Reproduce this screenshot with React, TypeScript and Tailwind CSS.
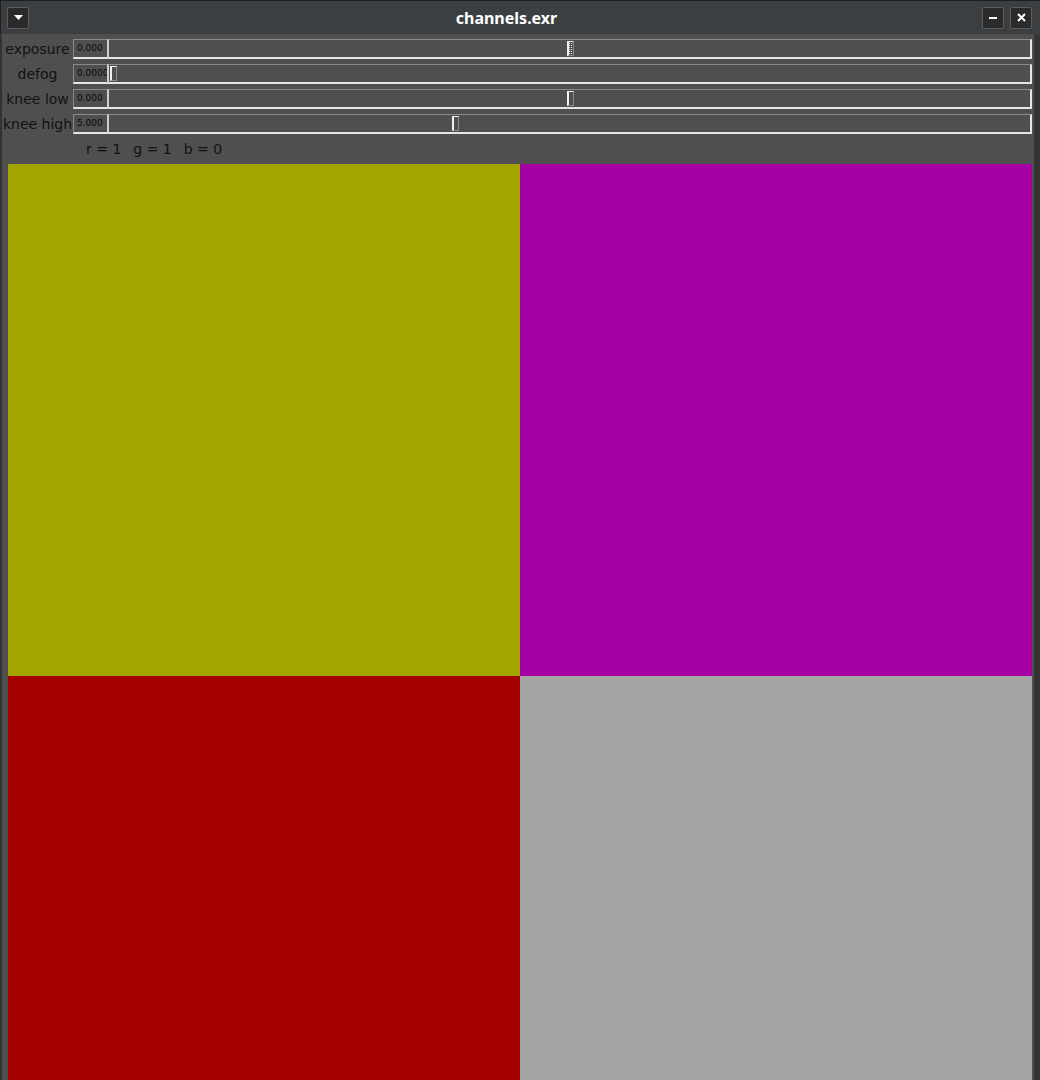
import React from "react";

interface SliderRow {
  label: string;
  value: string;
  frac: number;
  focused?: boolean;
}

const rows: SliderRow[] = [
  { label: "exposure", value: "0.000", frac: 0.498, focused: true },
  { label: "defog", value: "0.0000", frac: 0.002 },
  { label: "knee low", value: "0.000", frac: 0.498 },
  { label: "knee high", value: "5.000", frac: 0.373 },
];

const sans = { fontFamily: '"DejaVu Sans", sans-serif' };

function Slider({ row }: { row: SliderRow }) {
  return (
    <div className="flex h-[20px] shrink-0 items-stretch" style={sans}>
      <div className="w-[71px] flex items-center justify-center text-[14px] leading-none pb-[1px] text-[#121212] whitespace-nowrap">
        {row.label}
      </div>
      {/* value box */}
      <div className="w-[34px] border-t border-l border-b-2 border-t-[#8a8a8a] border-l-[#8a8a8a] border-b-[#e6e6e6] flex items-center pl-[3px] text-[9px] text-[#0a0a0a] overflow-hidden whitespace-nowrap">
        {row.value}
      </div>
      {/* track */}
      <div className="relative flex-1 mr-[2px] border-t border-l-2 border-b-2 border-r-2 border-t-[#8a8a8a] border-l-[#cfcfcf] border-b-[#e6e6e6] border-r-[#e6e6e6]">
        <div
          className="absolute top-[1px] h-[15px] w-[7px] border-l-2 border-t border-l-[#f0f0f0] border-t-[#f0f0f0] border-r border-b border-r-[#8a8a8a] border-b-[#8a8a8a] flex justify-center"
          style={{ left: `calc(${row.frac * 100}% - 1px)` }}
        >
          {row.focused && (
            <div className="mt-[1px] mb-[1px] w-[3px] border-l border-r border-dotted border-[#e8e8e8]" />
          )}
        </div>
      </div>
    </div>
  );
}

export default function App() {
  return (
    <div className="w-[1040px] h-[1080px] overflow-hidden flex flex-col bg-[#2c2c2c]">
      {/* title bar */}
      <div className="h-[34px] shrink-0 bg-[#3c3f41] border-t border-l border-[#1e1e1e] flex items-center pl-[6px] pr-[8px]">
        <button className="w-[22px] h-[22px] rounded-[2px] bg-[#2a2a2a] border border-[#5c5c5c] flex items-center justify-center">
          <svg width="9" height="5" viewBox="0 0 9 5">
            <path d="M0 0 H9 L4.5 5 Z" fill="#ffffff" />
          </svg>
        </button>
        <div
          className="flex-1 text-center text-white text-[16px] font-bold pl-[2px]"
          style={{ fontFamily: '"Noto Sans", sans-serif' }}
        >
          channels.exr
        </div>
        <div className="flex gap-[6px]">
          <button className="w-[22px] h-[22px] rounded-[2px] bg-[#2a2a2a] border border-[#5c5c5c] flex items-center justify-center">
            <div className="w-[8px] h-[2px] bg-white" />
          </button>
          <button className="w-[22px] h-[22px] rounded-[2px] bg-[#2a2a2a] border border-[#5c5c5c] flex items-center justify-center">
            <svg width="9" height="9" viewBox="0 0 9 9">
              <path d="M1 1 L8 8 M8 1 L1 8" stroke="#ffffff" strokeWidth="2" />
            </svg>
          </button>
        </div>
      </div>

      {/* controls + image */}
      <div className="flex-1 bg-[#4f4f4f] border-l-2 border-l-[#333333] border-r-[6px] border-r-[#343434] flex flex-col pt-[5px] overflow-hidden">
        <div className="flex flex-col gap-[5px] shrink-0">
          {rows.map((r) => (
            <Slider key={r.label} row={r} />
          ))}
        </div>
        <div
          className="h-[30px] shrink-0 flex items-center gap-[12px] pl-[84px] text-[14px] text-[#121212] whitespace-pre"
          style={sans}
        >
          <span>r = 1</span>
          <span>g = 1</span>
          <span>b = 0</span>
        </div>
        <div className="ml-[6px] mr-[2px] shrink-0 grid grid-cols-2">
          <div className="h-[512px] bg-[#a4a400]" />
          <div className="h-[512px] bg-[#a400a4]" />
          <div className="h-[512px] bg-[#a40000]" />
          <div className="h-[512px] bg-[#a4a4a4]" />
        </div>
      </div>
    </div>
  );
}
